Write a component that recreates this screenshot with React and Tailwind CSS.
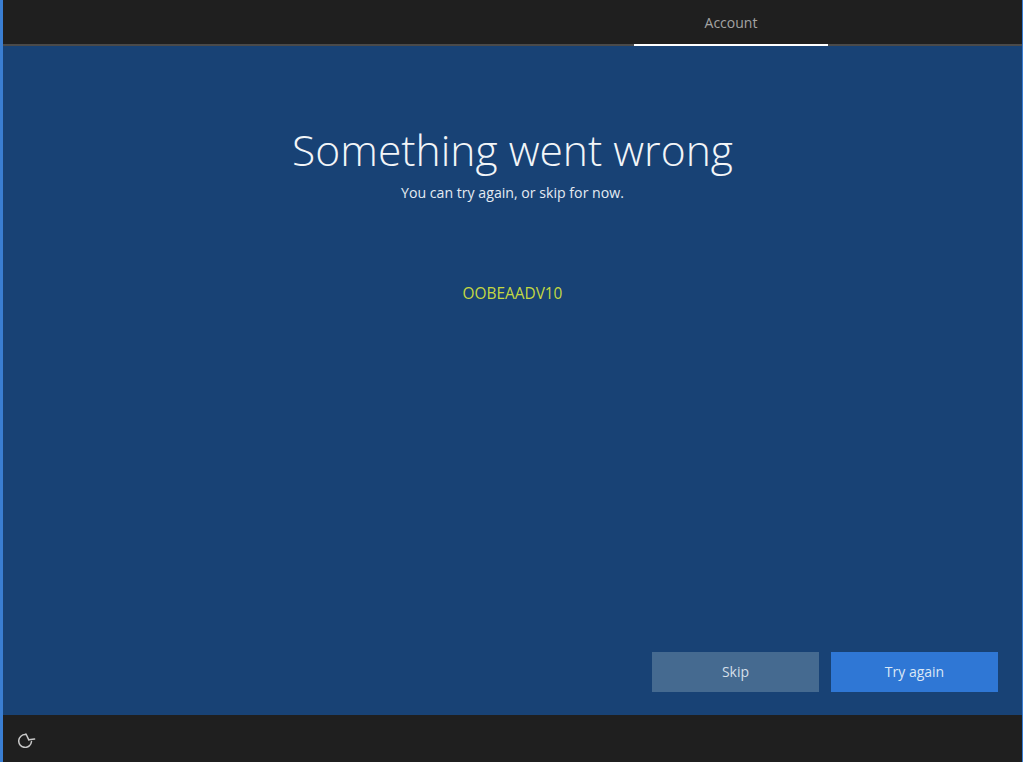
export default function App() {
  return (
    <div className="flex h-[762px] w-[1023px] flex-col overflow-hidden bg-[#3a7ed2] pl-[3px] pr-px font-['Open_Sans','Noto_Sans',sans-serif]">
      {/* top bar */}
      <header className="flex h-[46px] shrink-0 justify-end border-b-2 border-[#4a4a4a] bg-[#1f1f1f] pr-[194px]">
        <div className="-mb-[2px] flex h-[46px] w-[194px] items-center justify-center border-b-2 border-white pt-[2px] text-sm text-[#a3a3a3]">
          Account
        </div>
      </header>

      {/* main */}
      <main className="flex flex-1 flex-col items-center bg-[#184275] text-white">
        <h1 className="mt-[71px] text-[42.6px] leading-[64px] font-light text-[#f2f5f8]">Something went wrong</h1>
        <p className="mt-[2px] text-[14.15px] leading-5 text-[#e4ebf2]">You can try again, or skip for now.</p>
        <p className="mt-[81px] text-[15.4px] leading-5 text-[#c4d842]">OOBEAADV10</p>

        <div className="mt-auto flex gap-3 self-end pr-[24px] pb-[23px]">
          <button className="h-10 w-[167px] bg-[#456a90] text-sm text-[#d5dfe9]">Skip</button>
          <button className="h-10 w-[167px] bg-[#2f77d5] text-sm text-[#dbe7f6]">Try again</button>
        </div>
      </main>

      {/* bottom bar */}
      <footer className="flex h-[47px] shrink-0 items-center bg-[#1f1f1f] pl-[15px]">
        <svg width="18" height="18" viewBox="0 0 18 18" fill="none" stroke="#c8c8c8" strokeWidth="1.5" strokeLinecap="round">
          <path d="M7.5 4.6A6.4 6.4 0 1 0 13.5 11.5" />
          <path d="M8 4 10.8 9.8" />
          <path d="M10.8 9.8 16.6 9" />
        </svg>
      </footer>
    </div>
  );
}
